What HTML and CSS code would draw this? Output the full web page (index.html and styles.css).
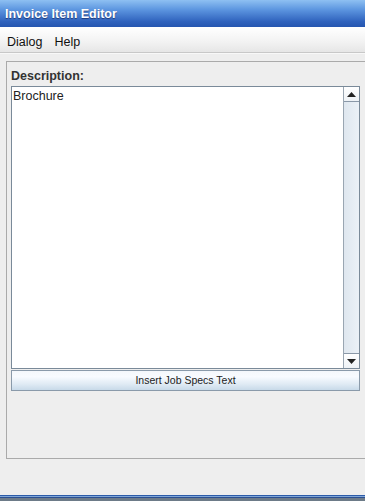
FILE: index.html
```html
<!DOCTYPE html>
<html>
<head>
<meta charset="utf-8">
<link rel="stylesheet" href="styles.css">
</head>
<body>
<div class="window">
  <div class="titlebar">Invoice Item Editor</div>
  <div class="menubar">
    <span class="menu">Dialog</span>
    <span class="menu">Help</span>
  </div>
  <div class="content">
    <div class="panel">
      <div class="label">Description:</div>
      <div class="textarea">
        <div class="text">Brochure</div>
        <div class="scrollbar">
          <div class="sbtn"><svg width="9" height="5" viewBox="0 0 9 5"><polygon points="0,5 9,5 4.5,0" fill="#222"/></svg></div>
          <div class="track"></div>
          <div class="sbtn down"><svg width="9" height="5" viewBox="0 0 9 5"><polygon points="0,0 9,0 4.5,5" fill="#222"/></svg></div>
        </div>
      </div>
      <div class="button">Insert Job Specs Text</div>
    </div>
  </div>
  <div class="bottom"></div>
</div>
</body>
</html>
```
FILE: styles.css
```css
html, body {
  margin: 0;
  padding: 0;
  background: #eeeeee;
}
.window {
  width: 365px;
  height: 501px;
  overflow: hidden;
  display: flex;
  flex-direction: column;
  font-family: "Liberation Sans", Arial, sans-serif;
  background: #eeeeee;
}
.titlebar {
  height: 27px;
  box-sizing: border-box;
  background: linear-gradient(#8ec0f2 0%, #5d96e0 35%, #2f62bd 80%, #2556b0 100%);
  color: #ffffff;
  font-weight: bold;
  font-size: 12.5px;
  padding: 7px 0 0 5px;
  text-shadow: 0 1px 1px rgba(0,0,40,0.5);
}
.menubar {
  height: 27px;
  box-sizing: border-box;
  background: linear-gradient(#ffffff, #f2f2f2 60%, #e6e6e6);
  border-bottom: 1px solid #c8c8c8;
  display: flex;
  gap: 12px;
  padding: 8px 0 0 7px;
  font-size: 12.5px;
  color: #111;
}
.content {
  flex: 1;
  padding: 7px 0 0 6px;
  border-top: 1px solid #f8f8f8;
}
.panel {
  width: 380px;
  height: 398px;
  box-sizing: border-box;
  border: 1px solid #aaaaaa;
  border-right: none;
  padding: 7px 0 0 4px;
}
.label {
  font-size: 12.5px;
  font-weight: bold;
  color: #333;
  height: 17px;
}
.textarea {
  width: 349px;
  height: 283px;
  box-sizing: border-box;
  border: 1px solid #7a8a99;
  background: #fff;
  display: flex;
}
.text {
  flex: 1;
  font-size: 12.5px;
  color: #222;
  padding: 2px 0 0 1px;
}
.scrollbar {
  width: 15px;
  border-left: 1px solid #9aa6b2;
  display: flex;
  flex-direction: column;
  background: #e6eef6;
}
.sbtn {
  height: 15px;
  box-sizing: border-box;
  background: linear-gradient(#ffffff, #eef2f6);
  border-bottom: 1px solid #8a98a8;
  display: flex;
  align-items: center;
  justify-content: center;
}
.sbtn.down {
  border-bottom: none;
  border-top: 1px solid #8a98a8;
}
.track {
  flex: 1;
  background: linear-gradient(90deg, #dfe7ef, #ebf1f7);
}
.button {
  margin-top: 1px;
  width: 349px;
  height: 21px;
  box-sizing: border-box;
  border: 1px solid #8a9aaa;
  background: linear-gradient(#f4f7fb 0%, #f8fbff 30%, #dfeaf4 70%, #c8dae9 100%);
  font-size: 10.5px;
  color: #222;
  text-align: center;
  line-height: 19px;
}
.bottom {
  height: 6px;
  background: linear-gradient(#2c5ba8 0, #2c5ba8 1px, #7fa6d8 1px, #7fa6d8 2px, #2c4f90 2px, #2c4f90 3px, #6d7b88 3px);
  margin-top: 36px;
}
```
